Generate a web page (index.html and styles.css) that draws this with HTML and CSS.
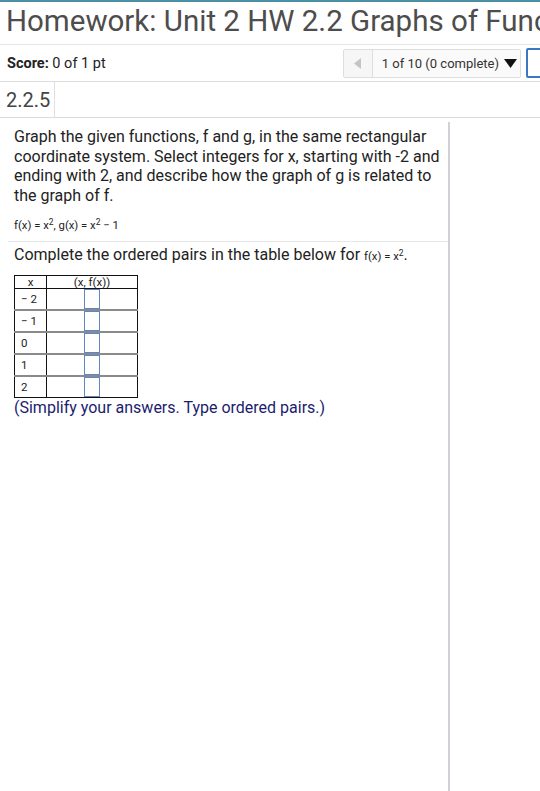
FILE: index.html
```html
<!DOCTYPE html>
<html>
<head>
<meta charset="utf-8">
<link rel="stylesheet" href="styles.css">
</head>
<body>
<div class="page">
  <header class="title-bar">
    <h1 class="title">Homework: Unit 2 HW 2.2 Graphs of Functions</h1>
  </header>
  <div class="score-row">
    <div class="score"><b>Score:</b> 0 of 1 pt</div>
    <div class="nav">
      <div class="nav-box">
        <span class="nav-prev"><svg width="8" height="11" viewBox="0 0 8 11"><path d="M7 0 L0 5.5 L7 11 Z" fill="#c4c4c4"/></svg></span>
        <span class="nav-label">1 of 10 (0 complete)<svg class="caret" width="13" height="9" viewBox="0 0 13 9"><path d="M0 0 L13 0 L6.5 9 Z" fill="#111"/></svg></span>
      </div>
      <div class="nav-next"></div>
    </div>
  </div>
  <div class="qnum-row">
    <span class="qnum">2.2.5</span>
  </div>
  <div class="content">
    <div class="panel">
      <p class="prompt">Graph the given functions, f and g, in the same rectangular coordinate system. Select integers for x, starting with -2 and ending with 2, and describe how the graph of g is related to the graph of f.</p>
      <p class="formula">f(x) = x<sup>2</sup>, g(x) = x<sup>2</sup> &minus; 1</p>
      <div class="part">
        <p class="instr">Complete the ordered pairs in the table below for <span class="small">f(x) = x<sup>2</sup></span>.</p>
        <table class="pairs">
          <tr><th class="c1">x</th><th class="c2">(x, f(x))</th></tr>
          <tr><td class="c1">&minus; 2</td><td class="c2"><span class="box"></span></td></tr>
          <tr><td class="c1">&minus; 1</td><td class="c2"><span class="box"></span></td></tr>
          <tr><td class="c1">0</td><td class="c2"><span class="box"></span></td></tr>
          <tr><td class="c1">1</td><td class="c2"><span class="box"></span></td></tr>
          <tr><td class="c1">2</td><td class="c2"><span class="box"></span></td></tr>
        </table>
        <p class="hint">(Simplify your answers. Type ordered pairs.)</p>
      </div>
    </div>
  </div>
</div>
</body>
</html>
```
FILE: styles.css
```css
html, body {
  margin: 0;
  padding: 0;
  background: #fff;
  overflow: hidden;
}
body {
  font-family: Roboto, "Liberation Sans", sans-serif;
  color: #222;
  width: 540px;
  height: 791px;
}
.page {
  width: 540px;
  height: 791px;
  display: flex;
  flex-direction: column;
  overflow: hidden;
}
.title-bar {
  border-top: 2px solid #4a8fa3;
  border-bottom: 1px solid #e6e6e6;
  height: 42px;
  box-sizing: content-box;
  overflow: hidden;
}
.title {
  margin: 0;
  padding: 2px 0 0 6px;
  font-weight: 400;
  font-size: 29.5px;
  line-height: 34px;
  color: #4d4d4d;
  white-space: nowrap;
}
.score-row {
  display: flex;
  align-items: center;
  height: 36px;
  border-bottom: 1px solid #dcdcdc;
}
.score {
  padding-left: 7px;
  font-size: 14.5px;
  color: #222;
}
.score b {
  font-weight: 700;
}
.nav {
  margin-left: auto;
  margin-right: -24px;
  display: flex;
  align-items: center;
}
.nav-box {
  display: flex;
  height: 27px;
  border: 1px solid #dedede;
  border-radius: 2px;
  background: #fff;
}
.nav-prev {
  width: 28px;
  display: flex;
  align-items: center;
  justify-content: center;
  border-right: 1px solid #dedede;
  background: #f6f6f6;
}
.nav-label {
  display: flex;
  align-items: center;
  gap: 5px;
  padding: 0 3px 0 9px;
  font-size: 13px;
  color: #333;
  background: #fafafa;
}
.caret {
  display: block;
}
.nav-next {
  width: 34px;
  height: 26px;
  margin-left: 5px;
  border: 2px solid #3a78c2;
  border-radius: 2px;
}
.qnum-row {
  height: 35px;
  border-bottom: 1px solid #dcdcdc;
  display: flex;
}
.qnum {
  display: flex;
  align-items: center;
  padding: 0 4px 0 6px;
  font-size: 20px;
  color: #444;
  border-right: 1px solid #e0e0e0;
}
.content {
  flex: 1;
  padding-top: 4px;
  display: flex;
}
.panel {
  width: 448px;
  border-right: 2px solid #cfd2d6;
  padding: 5px 0 0 0;
}
.prompt {
  margin: 0;
  padding: 0 6px 0 14px;
  font-size: 16px;
  line-height: 19.5px;
  color: #222;
}
.formula {
  margin: 12px 0 0 0;
  padding: 0 0 0 14px;
  font-size: 11.3px;
  line-height: 18px;
  color: #222;
}
sup {
  font-size: 75%;
  line-height: 0;
  vertical-align: 0.5em;
}
.part {
  margin: 6px 0 0 8px;
  border-top: 1px solid #e6e6e6;
  padding: 3px 0 0 6px;
}
.instr {
  margin: 0;
  font-size: 16px;
  line-height: 19px;
}
.small {
  font-size: 11.3px;
}
.pairs {
  margin-top: 9px;
  border-collapse: collapse;
  border: 1px solid #111;
  font-size: 11.5px;
}
.pairs th {
  font-weight: 400;
  height: 12px;
  padding: 0;
  line-height: 12px;
  border-bottom: 1px solid #111;
  text-align: center;
}
.pairs td {
  height: 19px;
  padding: 0;
  border-top: 2px solid #8a8a8a;
}
.pairs tr:nth-child(2) td {
  border-top: 1px solid #111;
}
.pairs .c1 {
  width: 32px;
  border-right: 1px solid #111;
  text-align: left;
  padding-left: 6px;
  box-sizing: border-box;
}
.pairs th.c1 {
  text-align: center;
  padding-left: 0;
}
.pairs .c2 {
  width: 90px;
  text-align: center;
}
.box {
  display: inline-block;
  width: 14px;
  height: 18px;
  border: 1px solid #5f86c6;
  vertical-align: middle;
}
.hint {
  margin: 0;
  font-size: 16px;
  line-height: 19px;
  color: #1c1c6e;
}
```
